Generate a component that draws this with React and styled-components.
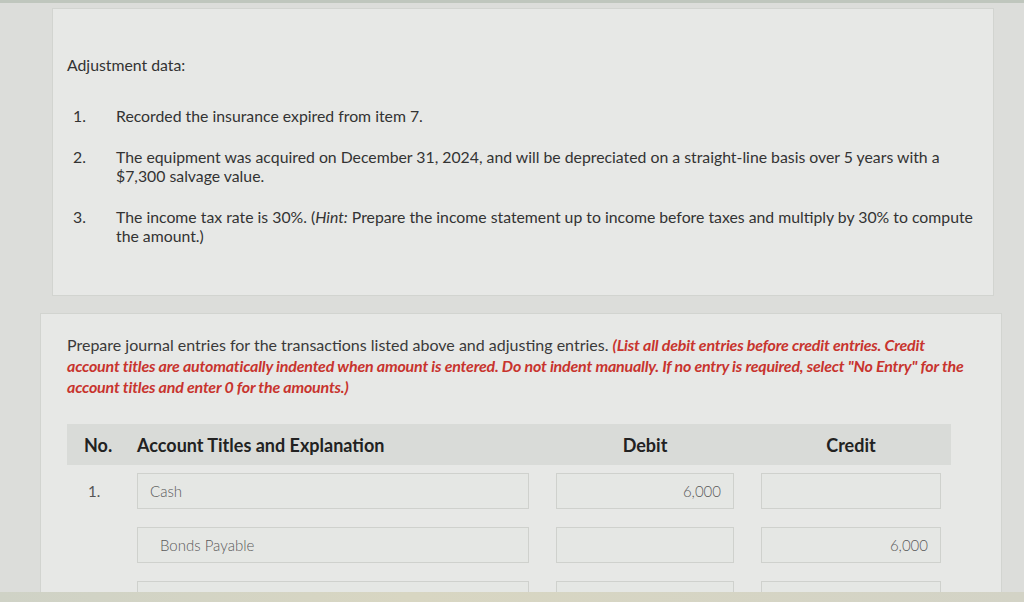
import styled, { createGlobalStyle } from "styled-components";

const GlobalStyle = createGlobalStyle`
  html, body {
    margin: 0;
    padding: 0;
    background: #dcddda;
    font-family: Lato, "Open Sans", "Liberation Sans", sans-serif;
    color: #333;
  }
  #root {
    height: 602px;
    overflow: hidden;
  }
`;

const Page = styled.div`
  height: 602px;
  overflow: hidden;
  border-top: 3px solid #bfc6bd;
  box-sizing: border-box;
  padding-top: 5px;
`;

const Panel = styled.section`
  margin-left: ${(p) => p.left}px;
  width: ${(p) => p.width}px;
  box-sizing: border-box;
  background: #e7e8e6;
  border: 1px solid #d2d4d0;
  padding: ${(p) => p.pad};
  margin-bottom: ${(p) => p.gap || 0}px;
`;

const Title = styled.div`
  font-size: 15.8px;
  line-height: 20px;
  margin-bottom: 31px;
`;

const List = styled.ol`
  list-style: none;
  margin: 0;
  padding: 0;
  display: flex;
  flex-direction: column;
  gap: 22px;
`;

const Item = styled.li`
  display: flex;
  font-size: 15.8px;
  line-height: 19px;

  .num {
    width: 49px;
    flex: none;
    padding-left: 6px;
    box-sizing: border-box;
  }
`;

const Lead = styled.p`
  margin: 0;
  font-size: 16px;
  line-height: 21px;
  color: #3a3a3a;
  max-width: 902px;

  .warn {
    color: #c8342e;
    font-style: italic;
    font-weight: 700;
    letter-spacing: -0.2px;
  }
`;

const Grid = styled.div`
  display: grid;
  grid-template-columns: 43px 392px 178px 180px;
  column-gap: 27px;
  align-items: center;
`;

const Head = styled(Grid)`
  margin-top: 27px;
  width: 884px;
  height: 41px;
  background: #d9dbd8;
  font-weight: 700;
  font-size: 18px;
  color: #222;

  .no {
    padding-left: 17px;
  }
  .amt {
    text-align: center;
  }
`;

const Row = styled(Grid)`
  margin-top: ${(p) => (p.first ? 8 : 18)}px;

  .no {
    padding-left: 21px;
    font-size: 15px;
    color: #555;
  }
`;

const Field = styled.div`
  height: 36px;
  box-sizing: border-box;
  border: 1px solid #cfd1cd;
  background: #e5e7e4;
  display: flex;
  align-items: center;
  justify-content: ${(p) => (p.num ? "flex-end" : "flex-start")};
  padding: 0 12px 0 ${(p) => (p.indent ? 22 : 12)}px;
  font-size: 15px;
  font-weight: 300;
  color: #5a5a5a;
`;

const BottomEdge = styled.div`
  position: fixed;
  left: 0;
  right: 0;
  bottom: 0;
  height: 10px;
  background: linear-gradient(90deg, #cfd2c6, #d8d6c2 40%, #d3d3c6);
`;

const rows = [
  { no: "1.", title: "Cash", debit: "6,000", credit: "" },
  { no: "", title: "Bonds Payable", indent: true, debit: "", credit: "6,000" },
  { no: "", title: "", debit: "", credit: "" },
];

export default function App() {
  return (
    <>
      <GlobalStyle />
      <Page>
        <Panel left={52} width={942} pad="46px 12px 50px 14px" gap={17}>
          <Title>Adjustment data:</Title>
          <List>
            <Item>
              <span className="num">1.</span>
              <span>Recorded the insurance expired from item 7.</span>
            </Item>
            <Item>
              <span className="num">2.</span>
              <span>
                The equipment was acquired on December 31, 2024, and will be
                depreciated on a straight-line basis over 5 years with a $7,300
                salvage value.
              </span>
            </Item>
            <Item>
              <span className="num">3.</span>
              <span>
                The income tax rate is 30%. (<i>Hint:</i> Prepare the income
                statement up to income before taxes and multiply by 30% to
                compute the amount.)
              </span>
            </Item>
          </List>
        </Panel>
        <Panel left={40} width={962} pad="20px 20px 40px 26px">
          <Lead>
            Prepare journal entries for the transactions listed above and
            adjusting entries.{" "}
            <span className="warn">
              (List all debit entries before credit entries. Credit account
              titles are automatically indented when amount is entered. Do not
              indent manually. If no entry is required, select "No Entry" for
              the account titles and enter 0 for the amounts.)
            </span>
          </Lead>
          <Head>
            <span className="no">No.</span>
            <span>Account Titles and Explanation</span>
            <span className="amt">Debit</span>
            <span className="amt">Credit</span>
          </Head>
          {rows.map((r, i) => (
            <Row key={i} first={i === 0}>
              <span className="no">{r.no}</span>
              <Field indent={r.indent}>{r.title}</Field>
              <Field num>{r.debit}</Field>
              <Field num>{r.credit}</Field>
            </Row>
          ))}
        </Panel>
      </Page>
      <BottomEdge />
    </>
  );
}
